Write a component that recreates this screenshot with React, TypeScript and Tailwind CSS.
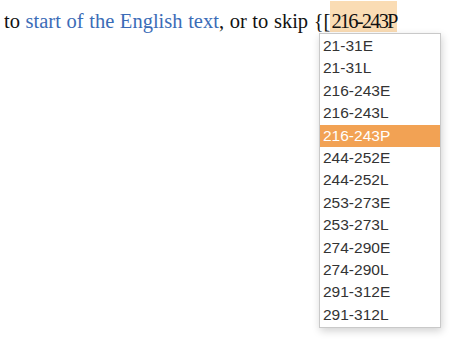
import React from "react";

const items = [
  "21-31E",
  "21-31L",
  "216-243E",
  "216-243L",
  "216-243P",
  "244-252E",
  "244-252L",
  "253-273E",
  "253-273L",
  "274-290E",
  "274-290L",
  "291-312E",
  "291-312L",
];

export default function App() {
  return (
    <div className="relative w-[474px] h-[351px] bg-white overflow-hidden">
      <p
        className="pl-[4px] pt-[6px] text-[20.5px] leading-[30px] text-[#111] whitespace-nowrap [word-spacing:0.5px]"
        style={{ fontFamily: '"Liberation Serif", serif' }}
      >
        to <span className="text-[#3b6cb7]">start of the English text</span>, or to skip {"{["}
        <span className="bg-[#fadcb4] pt-[9px] pl-[1px] tracking-[-1.8px]">216-243P</span>
      </p>
      <div
        className="absolute left-[319px] top-[33px] w-[122px] bg-white border border-[#c9c9c9] shadow-[1px_3px_8px_rgba(0,0,0,0.18)] pt-[1px] pb-[1px]"
        style={{ fontFamily: '"Liberation Sans", Arial, sans-serif' }}
      >
        {items.map((it) => (
          <div
            key={it}
            className={
              it === "216-243P"
                ? "h-[22.4px] leading-[22.4px] pl-[3px] text-[15.5px] bg-[#f2a254] text-white"
                : "h-[22.4px] leading-[22.4px] pl-[3px] text-[15.5px] text-[#333]"
            }
          >
            {it}
          </div>
        ))}
      </div>
    </div>
  );
}
